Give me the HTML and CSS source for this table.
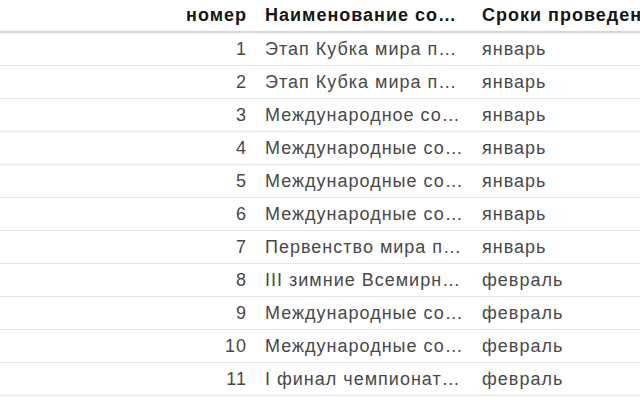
FILE: index.html
```html
<!DOCTYPE html>
<html lang="ru">
<head>
<meta charset="utf-8">
<link rel="stylesheet" href="styles.css">
</head>
<body>
<div class="wrap">
<table class="grid">
<colgroup>
<col class="c-idx"><col class="c-num"><col class="c-name"><col class="c-date">
</colgroup>
<thead>
<tr><th></th><th class="num">номер</th><th>Наименование соревнования</th><th>Сроки проведения</th></tr>
</thead>
<tbody>
<tr><td></td><td class="num">1</td><td>Этап Кубка мира по лыжным гонкам</td><td>январь</td></tr>
<tr><td></td><td class="num">2</td><td>Этап Кубка мира по биатлону</td><td>январь</td></tr>
<tr><td></td><td class="num">3</td><td>Международное соревнование по фристайлу</td><td>январь</td></tr>
<tr><td></td><td class="num">4</td><td>Международные соревнования по санному спорту</td><td>январь</td></tr>
<tr><td></td><td class="num">5</td><td>Международные соревнования по бобслею</td><td>январь</td></tr>
<tr><td></td><td class="num">6</td><td>Международные соревнования по скелетону</td><td>январь</td></tr>
<tr><td></td><td class="num">7</td><td>Первенство мира по прыжкам на лыжах</td><td>январь</td></tr>
<tr><td></td><td class="num">8</td><td>III зимние Всемирные военные игры</td><td>февраль</td></tr>
<tr><td></td><td class="num">9</td><td>Международные соревнования по керлингу</td><td>февраль</td></tr>
<tr><td></td><td class="num">10</td><td>Международные соревнования по сноуборду</td><td>февраль</td></tr>
<tr><td></td><td class="num">11</td><td>I финал чемпионат мира по шорт-треку</td><td>февраль</td></tr>
<tr><td></td><td class="num">12</td><td>Международные соревнования по конькобежному спорту</td><td>февраль</td></tr>
</tbody>
</table>
</div>
</body>
</html>
```
FILE: styles.css
```css
html, body {
  margin: 0;
  padding: 0;
  background: #fff;
  overflow: hidden;
}
.wrap {
  width: 640px;
  height: 400px;
  overflow: hidden;
}
.grid {
  table-layout: fixed;
  border-collapse: collapse;
  width: 800px;
  font-family: "Liberation Sans", Arial, sans-serif;
  font-size: 18px;
  letter-spacing: 1px;
  color: #484848;
}
.c-idx { width: 150px; }
.c-num { width: 106px; }
.c-name { width: 217px; }
.c-date { width: 327px; }
.grid th, .grid td {
  padding: 0 9px;
  white-space: nowrap;
  overflow: hidden;
  text-overflow: ellipsis;
  text-align: left;
  vertical-align: middle;
}
.grid th {
  height: 31px;
  font-weight: bold;
  color: #151515;
  border-bottom: 2px solid #d6d6d6;
}
.grid td {
  height: 32px;
  border-bottom: 1px solid #e6e6e6;
}
.grid .num { text-align: right; }
```
